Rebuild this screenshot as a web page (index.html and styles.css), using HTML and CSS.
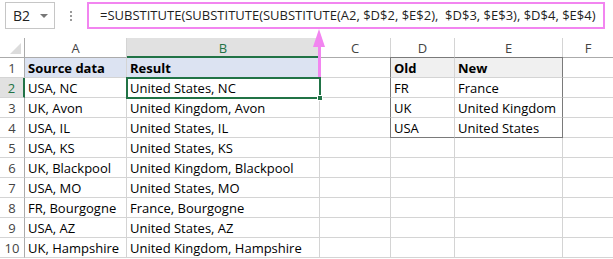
FILE: index.html
```html
<!DOCTYPE html>
<html>
<head>
<meta charset="utf-8">
<link rel="stylesheet" href="styles.css">
</head>
<body>
<div class="app">
  <div class="toolbar">
    <div class="namebox"><span class="ref">B2</span><span class="caret"></span></div>
    <div class="dots"><i></i><i></i><i></i></div>
    <div class="formula">=SUBSTITUTE(SUBSTITUTE(SUBSTITUTE(A2, $D$2, $E$2),&nbsp; $D$3, $E$3), $D$4, $E$4)</div>
  </div>
  <div class="sheet">
    <div class="c corner"><span class="tri"></span></div>
    <div class="c ch">A</div>
    <div class="c ch sel">B</div>
    <div class="c ch">C</div>
    <div class="c ch">D</div>
    <div class="c ch">E</div>
    <div class="c ch last">F</div>

    <div class="c rh">1</div>
    <div class="c hd blue">Source data</div>
    <div class="c hd blue">Result</div>
    <div class="c"></div>
    <div class="c hd gray tl">Old</div>
    <div class="c hd gray tr">New</div>
    <div class="c last"></div>

    <div class="c rh selr">2</div>
    <div class="c">USA, NC</div>
    <div class="c active">United States, NC<span class="handle"></span></div>
    <div class="c"></div>
    <div class="c tl">FR</div>
    <div class="c tr">France</div>
    <div class="c last"></div>

    <div class="c rh">3</div>
    <div class="c">UK, Avon</div>
    <div class="c">United Kingdom, Avon</div>
    <div class="c"></div>
    <div class="c tl">UK</div>
    <div class="c tr">United Kingdom</div>
    <div class="c last"></div>

    <div class="c rh">4</div>
    <div class="c">USA, IL</div>
    <div class="c">United States, IL</div>
    <div class="c"></div>
    <div class="c tl tb">USA</div>
    <div class="c tr tb">United States</div>
    <div class="c last"></div>

    <div class="c rh">5</div>
    <div class="c">USA, KS</div>
    <div class="c">United States, KS</div>
    <div class="c"></div>
    <div class="c"></div>
    <div class="c"></div>
    <div class="c last"></div>

    <div class="c rh">6</div>
    <div class="c">UK, Blackpool</div>
    <div class="c">United Kingdom, Blackpool</div>
    <div class="c"></div>
    <div class="c"></div>
    <div class="c"></div>
    <div class="c last"></div>

    <div class="c rh">7</div>
    <div class="c">USA, MO</div>
    <div class="c">United States, MO</div>
    <div class="c"></div>
    <div class="c"></div>
    <div class="c"></div>
    <div class="c last"></div>

    <div class="c rh">8</div>
    <div class="c">FR, Bourgogne</div>
    <div class="c">France, Bourgogne</div>
    <div class="c"></div>
    <div class="c"></div>
    <div class="c"></div>
    <div class="c last"></div>

    <div class="c rh">9</div>
    <div class="c">USA, AZ</div>
    <div class="c">United States, AZ</div>
    <div class="c"></div>
    <div class="c"></div>
    <div class="c"></div>
    <div class="c last"></div>

    <div class="c rh">10</div>
    <div class="c">UK, Hampshire</div>
    <div class="c">United Kingdom, Hampshire</div>
    <div class="c"></div>
    <div class="c"></div>
    <div class="c"></div>
    <div class="c last"></div>
  </div>
  <div class="arrow"><span class="head"></span><span class="shaft"></span></div>
</div>
</body>
</html>
```

FILE: styles.css
```css
* { box-sizing: border-box; }
html, body { margin: 0; padding: 0; background: #fff; }
body {
  font-family: "Open Sans", "Noto Sans", sans-serif;
  color: #000;
  width: 613px;
  height: 259px;
  overflow: hidden;
}
.app { position: relative; width: 613px; height: 259px; }

.toolbar {
  height: 38px;
  display: flex;
  align-items: flex-start;
  padding-top: 2px;
}
.namebox {
  margin-left: 5px;
  width: 50px;
  height: 27px;
  border: 1px solid #c6c6c6;
  display: flex;
  align-items: center;
  padding-left: 7px;
  font-size: 14px;
  color: #222;
}
.namebox .ref { width: 25px; }
.caret {
  width: 0; height: 0;
  border-left: 4px solid transparent;
  border-right: 4px solid transparent;
  border-top: 4px solid #777;
  margin-left: 2px;
}
.dots {
  width: 32px;
  height: 27px;
  display: flex;
  flex-direction: column;
  align-items: center;
  justify-content: center;
  gap: 2px;
}
.dots i { width: 2px; height: 2px; background: #9a9a9a; display: block; }
.formula {
  margin-left: 0;
  width: 518px;
  height: 27px;
  border: 2px solid #f285f0;
  padding-left: 11px;
  font-size: 13px;
  line-height: 23px;
  color: #1f1f1f;
  white-space: nowrap;
}

.sheet {
  display: grid;
  grid-template-columns: 25px 102px 193px 71px 64px 108px 50px;
  grid-auto-rows: 20px;
  font-size: 13px;
}
.c {
  border-right: 1px solid #d4d4d4;
  border-bottom: 1px solid #d4d4d4;
  padding-left: 3px;
  line-height: 20px;
  white-space: nowrap;
  overflow: visible;
  position: relative;
}
.c.last { border-right: none; }
.ch {
  text-align: center;
  padding-left: 0;
  color: #444;
  border-bottom: 1px solid #ababab;
  border-right: 1px solid #d4d4d4;
}
.ch.sel { background: #e1e1e1; border-bottom: 2px solid #217346; color: #217346; }
.corner { border-bottom: 1px solid #ababab; border-right: 1px solid #ababab; }
.tri {
  position: absolute; right: 3px; bottom: 3px;
  width: 0; height: 0;
  border-left: 11px solid transparent;
  border-bottom: 11px solid #dcdcdc;
}
.rh {
  text-align: center;
  padding-left: 0;
  color: #444;
  border-right: 1px solid #ababab;
}
.rh.selr { background: #e1e1e1; color: #217346; border-right: 2px solid #217346; }
.hd { font-weight: 700; }
.blue { background: #dce3f2; }
.gray { background: #f0f0f0; }
.tl { border-left: 1px solid #7a7a7a; margin-left: -1px; }
.tr { border-right: 1px solid #7a7a7a; }
.gray.tl, .gray.tr { border-top: 1px solid #7a7a7a; margin-top: -1px; height: 21px; }
.tb { border-bottom: 1px solid #7a7a7a; }
.active { outline: 2px solid #217346; outline-offset: -1px; z-index: 2; }
.handle {
  position: absolute; right: -4px; bottom: -4px;
  width: 6px; height: 6px; background: #217346; border: 1px solid #fff;
}

.arrow {
  position: absolute;
  left: 313px;
  top: 29px;
  width: 12px;
  height: 50px;
  display: flex;
  flex-direction: column;
  align-items: center;
}
.arrow .head {
  width: 0; height: 0;
  border-left: 6px solid transparent;
  border-right: 6px solid transparent;
  border-bottom: 18px solid #f285f0;
}
.arrow .shaft { width: 3px; flex: 1; background: #f285f0; }
```
